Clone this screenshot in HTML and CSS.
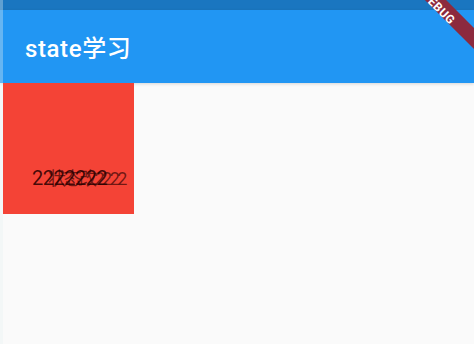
FILE: index.html
```html
<!DOCTYPE html>
<html>
<head>
  <meta charset="UTF-8">
  <meta name="viewport" content="width=device-width, initial-scale=1.0">
  <title>state学习</title>
  <link rel="stylesheet" href="styles.css">
</head>
<body>
  <div class="screen">
    <div class="status-bar"></div>
    <div class="app-bar">
      <h1 class="title">state学习</h1>
    </div>

    <div class="content">
      <!-- 红色方块，文字切换中 -->
      <div class="box">
        <div class="label">
          <span class="txt old">2222222</span>
          <span class="txt new">状态改2222</span>
        </div>
      </div>
    </div>

    <div class="banner"><span>DEBUG</span></div>
    <div class="edge"></div>
  </div>
</body>
</html>
```

FILE: styles.css
```css
html, body {
  margin: 0;
  padding: 0;
}
body {
  font-family: Roboto, "Noto Sans CJK SC", sans-serif;
  background: #fafafa;
}
.screen {
  position: relative;
  width: 474px;
  height: 344px;
  overflow: hidden;
  background: #fafafa;
}
.status-bar {
  height: 10px;
  background: #1a76c0;
}
.app-bar {
  height: 73px;
  background: #2196f3;
  display: flex;
  align-items: center;
  padding-left: 25px;
  box-sizing: border-box;
  box-shadow: 0 1px 3px rgba(0, 0, 0, 0.15);
}
.title {
  margin: 0;
  color: #fff;
  font-size: 24px;
  font-weight: 500;
  letter-spacing: 0.6px;
}
.content {
  padding-left: 3px;
}
.box {
  width: 131px;
  height: 131px;
  background: #f44336;
  display: flex;
  align-items: flex-end;
  padding-bottom: 25px;
  box-sizing: border-box;
}
.label {
  position: relative;
  margin-left: 29px;
  height: 22px;
  width: 100px;
}
.txt {
  position: absolute;
  top: 0;
  left: 0;
  font-size: 20px;
  line-height: 22px;
  color: rgba(40, 0, 0, 0.85);
  white-space: nowrap;
  letter-spacing: -0.5px;
}
.new {
  left: 16px;
  top: 1px;
  font-size: 18px;
  letter-spacing: -2.5px;
  opacity: 0.75;
}
.banner {
  position: absolute;
  top: -2px;
  right: -37px;
  width: 140px;
  height: 15px;
  background: #8c2a3e;
  transform: rotate(45deg);
  text-align: center;
}
.banner span {
  color: #fff;
  font-size: 12px;
  font-weight: 700;
  line-height: 15px;
  letter-spacing: 0.5px;
}
.edge {
  position: absolute;
  top: 0;
  left: 0;
  width: 3px;
  height: 100%;
  background: rgba(230, 240, 240, 0.35);
}
```
